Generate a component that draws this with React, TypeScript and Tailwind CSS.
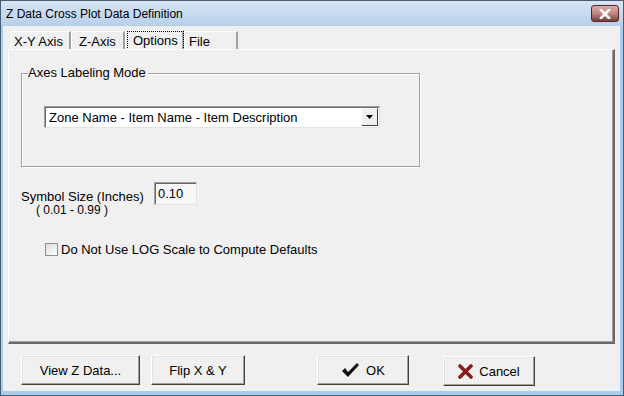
import React from "react";

const tabs = [
  { label: "X-Y Axis", w: "w-[60px]", pl: "pl-0" },
  { label: "Z-Axis", w: "w-[54px]", pl: "pl-[5px]" },
  { label: "Options", w: "w-[59px]", pl: "pl-[1px]" },
  { label: "File", w: "w-[54px]", pl: "pl-[2px]" },
];

const Button = ({
  className = "",
  children,
}: {
  className?: string;
  children: React.ReactNode;
}) => (
  <button
    className={`h-[30px] flex items-center justify-center gap-[6px] bg-[#f0f0f0] border border-t-white border-l-white border-r-[#404040] border-b-[#404040] shadow-[inset_-1px_-1px_0_#a0a0a0,inset_1px_1px_0_#e3e3e3] ${className}`}
  >
    {children}
  </button>
);

const CloseButton = () => (
  <div className="w-[28px] h-[17px] rounded-[3px] border border-[#5a2424] bg-gradient-to-b from-[#d9aca6] via-[#c08680] to-[#6e4240] flex items-center justify-center">
    <svg width="12" height="10" viewBox="0 0 12 10">
      <path d="M2 1 L10 9 M10 1 L2 9" stroke="#fff" strokeWidth="2.6" strokeLinecap="square" />
    </svg>
  </div>
);

export default function App() {
  return (
    <div className="w-[624px] h-[396px] flex flex-col bg-[#a9cdee] border border-[#4a5c70] overflow-hidden text-[13px] text-black font-['Liberation_Sans',Arial,sans-serif] leading-none">
      {/* title bar */}
      <div className="h-[25px] flex items-center pl-[5px] pr-[4px] bg-gradient-to-b from-[#d6e5f6] to-[#b7cfea]">
        <span className="flex-1 text-[12px] text-black">Z Data Cross Plot Data Definition</span>
        <CloseButton />
      </div>

      {/* client */}
      <div className="flex-1 ml-[2px] mr-[3px] mb-[4px] bg-[#f0f0f0] flex flex-col">
        {/* tab strip */}
        <div className="ml-[8px] mt-[4px] h-[19px] flex items-end">
          {tabs.map((t) => {
            const active = t.label === "Options";
            return (
              <div
                key={t.label}
                className={`flex items-center border-t border-l border-white border-r-2 border-r-[#a0a0a0] ${t.w} ${t.pl} ${
                  active ? "h-[19px]" : "h-[18px] pt-[1px]"
                }`}
              >
                <span
                  className={
                    active
                      ? "border border-dotted border-black px-[5px] py-[2px]"
                      : "px-[2px]"
                  }
                >
                  {t.label}
                </span>
              </div>
            );
          })}
        </div>

        {/* panel */}
        <div className="ml-[5px] mr-[5px] h-[295px] border-t border-l border-white border-r-2 border-b-2 border-r-[#696969] border-b-[#696969] shadow-[inset_-1px_-1px_0_#a0a0a0] flex flex-col pl-[12px]">
          <fieldset className="mt-[16px] w-[399px] h-[101px] border border-[#a0a0a0] shadow-[inset_1px_1px_0_#fff,1px_1px_0_#fff] px-[22px]">
            <legend className="ml-[-16px] px-0 pr-[2px] leading-[14px]">Axes Labeling Mode</legend>
            <div className="mt-[26px] w-[336px] h-[22px] bg-white border border-t-[#a0a0a0] border-l-[#a0a0a0] border-r-[#e3e3e3] border-b-[#e3e3e3] shadow-[inset_1px_1px_0_#696969] flex items-center">
              <span className="flex-1 pl-[4px]">Zone Name - Item Name - Item Description</span>
              <div className="w-[17px] h-[18px] mr-[1px] bg-[#f0f0f0] border border-t-white border-l-white border-r-[#404040] border-b-[#404040] flex items-center justify-center">
                <svg width="7" height="4" viewBox="0 0 7 4">
                  <path d="M0 0 H7 L3.5 4 Z" fill="#000" />
                </svg>
              </div>
            </div>
          </fieldset>

          <div className="mt-[15px] flex items-start">
            <div className="mt-[8px] flex flex-col w-[133px]">
              <span>Symbol Size (Inches)</span>
              <span className="ml-[15px] mt-[1px] text-[12px]">( 0.01 - 0.99 )</span>
            </div>
            <div className="w-[43px] h-[23px] bg-[#f7f7f7] border border-t-[#a0a0a0] border-l-[#a0a0a0] border-r-[#e3e3e3] border-b-[#e3e3e3] shadow-[inset_1px_1px_0_#696969] pl-[3px] pt-[4px]">
              0.10
            </div>
          </div>

          <div className="mt-[27px] ml-[24px] flex items-center gap-[3px]">
            <div className="w-[13px] h-[13px] border border-[#8e8f8f] bg-gradient-to-br from-[#dcdcdc] to-white" />
            <span>Do Not Use LOG Scale to Compute Defaults</span>
          </div>
        </div>

        {/* buttons */}
        <div className="mt-[11px] flex items-start">
          <Button className="ml-[18px] w-[119px]">View Z Data...</Button>
          <Button className="ml-[11px] w-[94px]">Flip X &amp; Y</Button>
          <Button className="ml-[72px] w-[92px]">
            <svg width="19" height="16" viewBox="0 0 19 16">
              <path d="M1 9 L4 6 L7 10 L16 1 L18 3 L7 15 Z" fill="#111" />
            </svg>
            <span>OK</span>
          </Button>
          <Button className="ml-[34px] mt-[1px] w-[92px]">
            <svg width="15" height="15" viewBox="0 0 15 15">
              <path d="M2 2 L13 13 M13 2 L2 13" stroke="#8a1c1c" strokeWidth="3.6" strokeLinecap="round" />
            </svg>
            <span>Cancel</span>
          </Button>
        </div>
      </div>
    </div>
  );
}
